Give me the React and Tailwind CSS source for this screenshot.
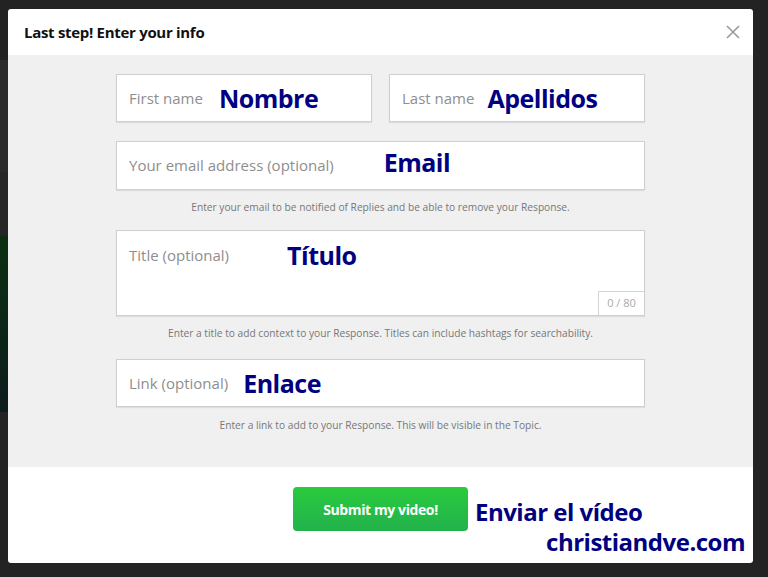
import React from "react";

const labelFont = { fontFamily: '"Open Sans", "Noto Sans", sans-serif' };

const Field = ({ placeholder, note, gap, className = "" }) => (
  <div
    className={`flex items-center bg-white border border-[#cfcfcf] shadow-[0_1px_1px_rgba(0,0,0,0.08)] pl-[12px] h-[48px] ${className}`}
  >
    <span className="text-[15px] text-[#8e8e8e] font-['Open_Sans',sans-serif] whitespace-nowrap">
      {placeholder}
    </span>
    <span
      className={`text-[25px] font-bold text-[#000080] leading-none whitespace-nowrap tracking-[-0.5px] ${gap}`}
      style={labelFont}
    >
      {note}
    </span>
  </div>
);

const Help = ({ children }) => (
  <p className="text-center text-[10.2px] text-[#777] font-['Open_Sans',sans-serif] leading-none">
    {children}
  </p>
);

export default function App() {
  return (
    <div className="w-[768px] h-[577px] bg-[#232323] flex overflow-hidden">
      {/* page behind the modal */}
      <div className="w-[8px] flex flex-col shrink-0">
        <div className="h-[60px]" />
        <div className="h-[112px] bg-[#2a2a2a]" />
        <div className="h-[64px] bg-[#262626]" />
        <div className="h-[176px] bg-gradient-to-b from-[#0b3010] to-[#0c1c1c]" />
      </div>

      {/* modal */}
      <div className="w-[745px] h-[554px] mt-[9px] bg-white rounded-[3px] flex flex-col overflow-hidden">
        <div className="h-[46px] flex items-center justify-between pl-[16px] pr-[13px] shrink-0">
          <h2 className="text-[15px] font-bold text-[#111] font-['Open_Sans',sans-serif] tracking-[-0.3px]">
            Last step! Enter your info
          </h2>
          <svg width="14" height="14" viewBox="0 0 14 14" className="text-[#9a9a9a]">
            <path d="M1 1L13 13M13 1L1 13" stroke="currentColor" strokeWidth="1.6" />
          </svg>
        </div>

        <div className="h-[412px] bg-[#f0f0f0] pt-[19px] shrink-0">
          <div className="w-[529px] mx-auto flex flex-col">
            <div className="flex gap-[17px]">
              <Field className="flex-1" placeholder="First name" note="Nombre" gap="ml-[16px]" />
              <Field className="flex-1" placeholder="Last name" note="Apellidos" gap="ml-[13px]" />
            </div>

            <Field className="mt-[19px] h-[49px]" placeholder="Your email address (optional)" note="Email" gap="ml-[50px] -mt-[6px]" />
            <div className="mt-[12px]">
              <Help>Enter your email to be notified of Replies and be able to remove your Response.</Help>
            </div>

            <div className="mt-[18px] h-[86px] bg-white border border-[#cfcfcf] shadow-[0_1px_1px_rgba(0,0,0,0.08)] relative">
              <div className="flex items-center pl-[12px] pt-[12px]">
                <span className="text-[15px] text-[#8e8e8e] font-['Open_Sans',sans-serif] whitespace-nowrap">
                  Title (optional)
                </span>
                <span
                  className="text-[25px] font-bold text-[#000080] leading-none ml-[58px] tracking-[-0.5px]"
                  style={labelFont}
                >
                  Título
                </span>
              </div>
              <div className="absolute right-0 bottom-0 w-[46px] h-[24px] border-t border-l border-[#d4d4d4] flex items-center justify-center text-[11px] text-[#aaa] font-['Open_Sans',sans-serif]">
                0 / 80
              </div>
            </div>
            <div className="mt-[12px]">
              <Help>Enter a title to add context to your Response. Titles can include hashtags for searchability.</Help>
            </div>

            <Field className="mt-[21px]" placeholder="Link (optional)" note="Enlace" gap="ml-[15px]" />
            <div className="mt-[13px]">
              <Help>Enter a link to add to your Response. This will be visible in the Topic.</Help>
            </div>
          </div>
        </div>

        <div className="flex-1 flex pl-[285px] pt-[20px]">
          <button className="w-[175px] h-[44px] rounded-[4px] bg-gradient-to-b from-[#2acb3d] to-[#22b24b] text-white text-[14px] font-bold font-['Open_Sans',sans-serif] tracking-[-0.4px] shrink-0">
            Submit my video!
          </button>
          <div className="flex-1 flex flex-col pr-[8px]" style={labelFont}>
            <span className="text-[24px] font-bold text-[#000080] leading-none ml-[7px] mt-[13px] tracking-[-0.5px]">
              Enviar el vídeo
            </span>
            <span className="text-[24px] font-bold text-[#000080] leading-none self-end mt-[6px] tracking-[-0.5px]">
              christiandve.com
            </span>
          </div>
        </div>
      </div>
    </div>
  );
}
